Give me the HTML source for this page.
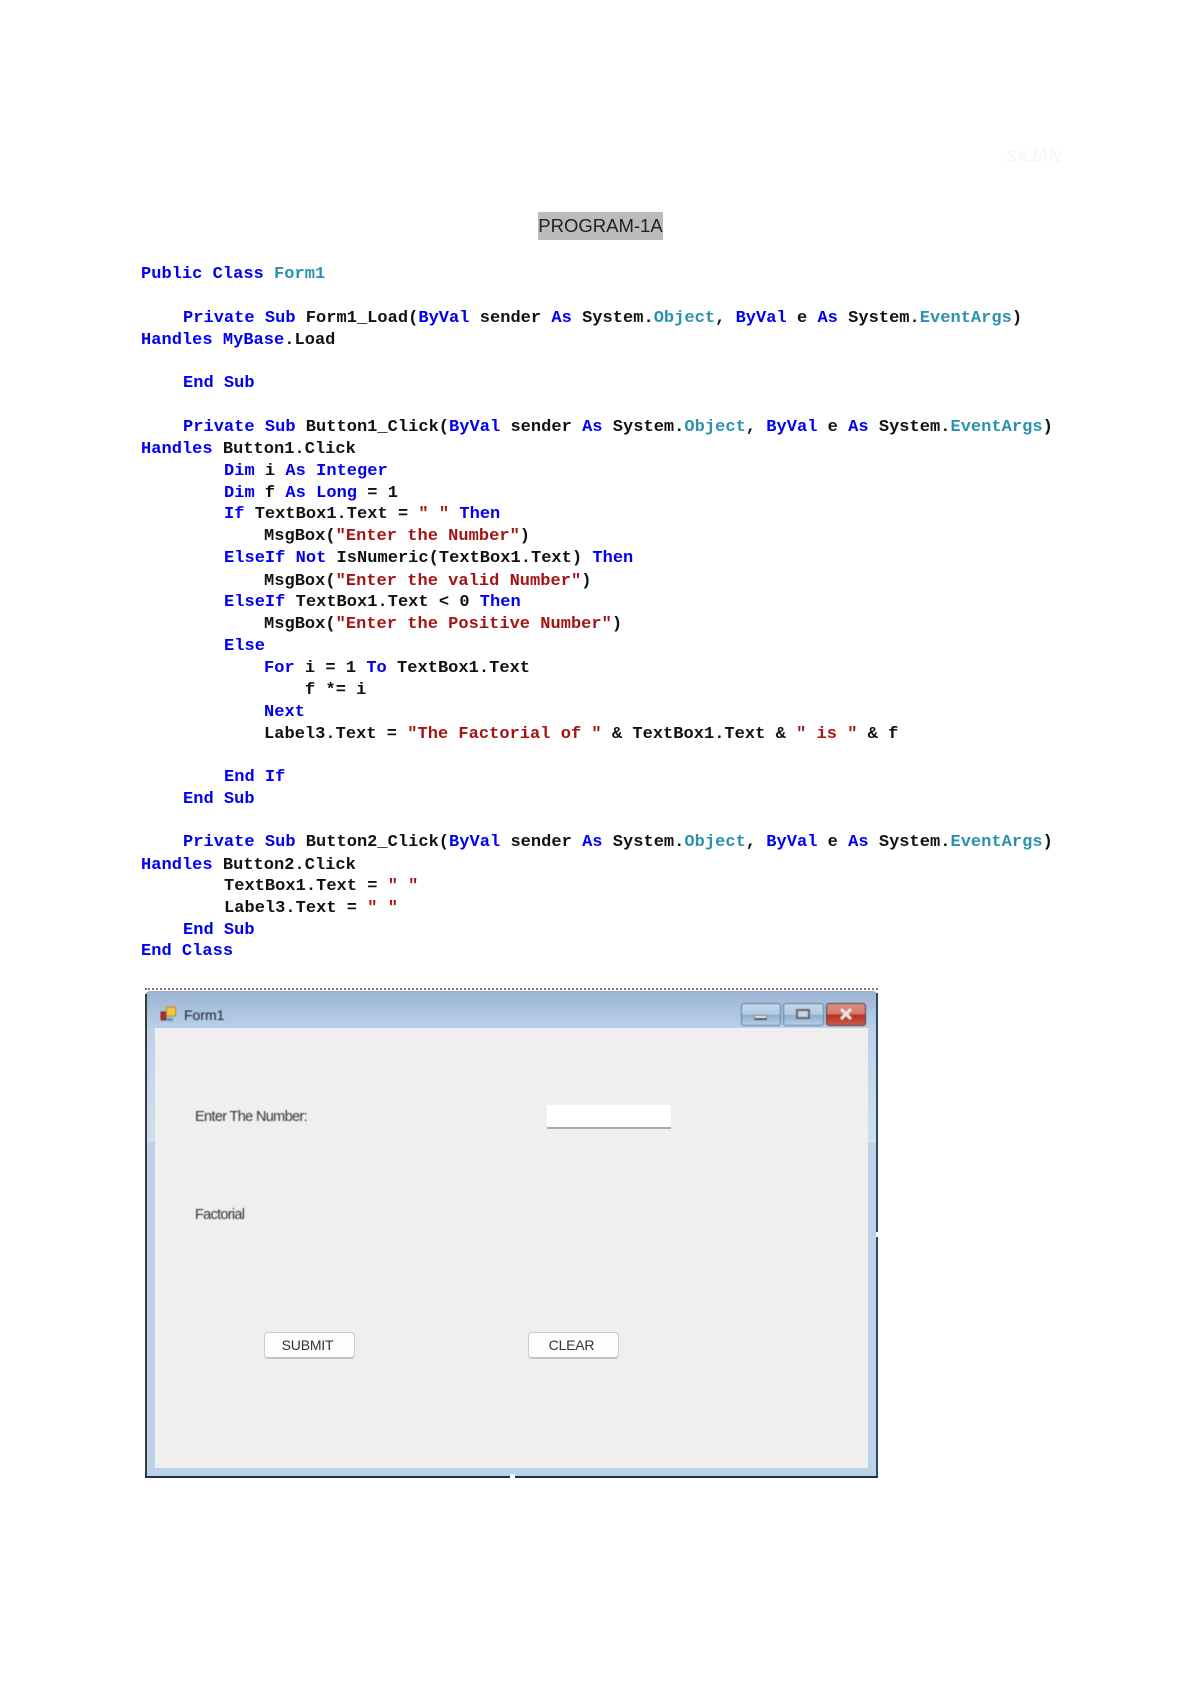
<!DOCTYPE html>
<html>
<head>
<meta charset="utf-8">
<style>
html,body{margin:0;padding:0;background:#fff;width:1200px;height:1696px;overflow:hidden}
#p{position:relative;width:1200px;height:1696px}
.l{position:absolute;white-space:pre;font:bold 17px/22px "Liberation Mono",monospace;letter-spacing:.03px;color:#111;filter:blur(.35px)}
.k{color:#0000f0}.t{color:#2b91af}.s{color:#a31515}
.a{position:absolute}
.u{position:absolute;white-space:pre;font-family:"Liberation Sans",sans-serif;color:#333;filter:blur(.4px)}
</style>
</head>
<body>
<div id="p">
<div class="a" style="left:1005px;top:145px;font:italic 17.5px/22px 'Liberation Sans',sans-serif;color:#f5f5f5">SAJAN</div>
<div class="a" style="left:538px;top:212px;width:125px;height:28px;background:#bbb;text-align:center;font:18.5px/28px 'Liberation Sans',sans-serif;color:#222;filter:blur(.3px)">PROGRAM-1A</div>

<div class="l" style="left:141px;top:264px"><span class="k">Public Class</span> <span class="t">Form1</span></div>
<div class="l" style="left:183px;top:308px"><span class="k">Private Sub</span> Form1_Load(<span class="k">ByVal</span> sender <span class="k">As</span> System.<span class="t">Object</span>, <span class="k">ByVal</span> e <span class="k">As</span> System.<span class="t">EventArgs</span>)</div>
<div class="l" style="left:141px;top:330px"><span class="k">Handles MyBase</span>.Load</div>
<div class="l" style="left:183px;top:373px"><span class="k">End Sub</span></div>
<div class="l" style="left:183px;top:417px"><span class="k">Private Sub</span> Button1_Click(<span class="k">ByVal</span> sender <span class="k">As</span> System.<span class="t">Object</span>, <span class="k">ByVal</span> e <span class="k">As</span> System.<span class="t">EventArgs</span>)</div>
<div class="l" style="left:141px;top:439px"><span class="k">Handles</span> Button1.Click</div>
<div class="l" style="left:224px;top:461px"><span class="k">Dim</span> i <span class="k">As Integer</span></div>
<div class="l" style="left:224px;top:483px"><span class="k">Dim</span> f <span class="k">As Long</span> = 1</div>
<div class="l" style="left:224px;top:504px"><span class="k">If</span> TextBox1.Text = <span class="s">" "</span> <span class="k">Then</span></div>
<div class="l" style="left:264px;top:526px">MsgBox(<span class="s">"Enter the Number"</span>)</div>
<div class="l" style="left:224px;top:548px"><span class="k">ElseIf Not</span> IsNumeric(TextBox1.Text) <span class="k">Then</span></div>
<div class="l" style="left:264px;top:571px">MsgBox(<span class="s">"Enter the valid Number"</span>)</div>
<div class="l" style="left:224px;top:592px"><span class="k">ElseIf</span> TextBox1.Text &lt; 0 <span class="k">Then</span></div>
<div class="l" style="left:264px;top:614px">MsgBox(<span class="s">"Enter the Positive Number"</span>)</div>
<div class="l" style="left:224px;top:636px"><span class="k">Else</span></div>
<div class="l" style="left:264px;top:658px"><span class="k">For</span> i = 1 <span class="k">To</span> TextBox1.Text</div>
<div class="l" style="left:305px;top:680px">f *= i</div>
<div class="l" style="left:264px;top:702px"><span class="k">Next</span></div>
<div class="l" style="left:264px;top:724px">Label3.Text = <span class="s">"The Factorial of "</span> &amp; TextBox1.Text &amp; <span class="s">" is "</span> &amp; f</div>
<div class="l" style="left:224px;top:767px"><span class="k">End If</span></div>
<div class="l" style="left:183px;top:789px"><span class="k">End Sub</span></div>
<div class="l" style="left:183px;top:832px"><span class="k">Private Sub</span> Button2_Click(<span class="k">ByVal</span> sender <span class="k">As</span> System.<span class="t">Object</span>, <span class="k">ByVal</span> e <span class="k">As</span> System.<span class="t">EventArgs</span>)</div>
<div class="l" style="left:141px;top:855px"><span class="k">Handles</span> Button2.Click</div>
<div class="l" style="left:224px;top:876px">TextBox1.Text = <span class="s">" "</span></div>
<div class="l" style="left:224px;top:898px">Label3.Text = <span class="s">" "</span></div>
<div class="l" style="left:183px;top:920px"><span class="k">End Sub</span></div>
<div class="l" style="left:141px;top:941px"><span class="k">End Class</span></div>

<!-- dotted top -->
<div class="a" style="left:145px;top:988px;width:733px;height:0;border-top:2px dotted #777"></div>
<!-- window -->
<div class="a" style="left:145px;top:991px;width:732px;height:487px;background:#bcd2e9;border-radius:5px 4px 0 0"></div>
<div class="a" style="left:145px;top:991px;width:732px;height:37px;background:linear-gradient(#9ab3d2,#b9d0e8);border-radius:5px 4px 0 0"></div>
<div class="a" style="left:145px;top:994px;width:2px;height:484px;background:#3a3a3a"></div>
<div class="a" style="left:876px;top:993px;width:2px;height:485px;background:#2e4a66"></div>
<div class="a" style="left:876px;top:1232px;width:2px;height:5px;background:#fff"></div>
<div class="a" style="left:145px;top:1476px;width:733px;height:2px;background:#2a2f38"></div>
<div class="a" style="left:147px;top:1475px;width:729px;height:1px;background:#9fd6f2"></div>
<div class="a" style="left:510px;top:1474px;width:5px;height:5px;background:#fff"></div>
<!-- client -->
<div class="a" style="left:155px;top:1028px;width:713px;height:440px;background:#efefef"></div>
<!-- strip highlights -->
<div class="a" style="left:147px;top:1028px;width:8px;height:114px;background:linear-gradient(#bcd2e9,#cfdff0)"></div>
<div class="a" style="left:868px;top:1028px;width:8px;height:115px;background:linear-gradient(#bcd2e9,#cfdff0)"></div>

<!-- icon -->
<svg class="a" style="left:160px;top:1005px;filter:blur(.4px)" width="17" height="18" viewBox="0 0 17 18">
<rect x="1" y="7" width="5" height="8" fill="#a8322c" stroke="#7a2a28"/>
<rect x="6.5" y="2" width="9" height="9" fill="#f4c83e" stroke="#c08a20"/>
<rect x="7" y="13" width="6" height="3" fill="#5b8fd0"/>
</svg>
<div class="u" style="left:184px;top:1006px;font-size:14px;line-height:18px;color:#223">Form1</div>

<!-- window buttons -->
<div class="a" style="left:741px;top:1003px;width:38px;height:21px;border:1px solid #5f7c9f;border-radius:3px;background:linear-gradient(#c2d5ea 0,#b5cbe3 50%,#8cadcc 52%,#b9cfe6 100%);filter:blur(.4px)">
<div class="a" style="left:12px;top:11px;width:13px;height:5px;background:#eef2f6;border:1px solid #888;border-bottom:2px solid #555;box-sizing:border-box"></div>
</div>
<div class="a" style="left:783px;top:1003px;width:39px;height:21px;border:1px solid #5f7c9f;border-radius:3px;background:linear-gradient(#c2d5ea 0,#b5cbe3 50%,#8cadcc 52%,#b9cfe6 100%);filter:blur(.4px)">
<div class="a" style="left:12px;top:5px;width:14px;height:10px;background:#c8d4e0;border:2px solid #666;box-sizing:border-box"></div>
</div>
<div class="a" style="left:826px;top:1003px;width:38px;height:21px;border:1px solid #50405a;border-radius:3px;background:linear-gradient(#dc8f83 0,#d5766a 48%,#b5301f 52%,#cb5a4a 100%);filter:blur(.4px)">
<svg class="a" style="left:11px;top:3px" width="16" height="14" viewBox="0 0 16 14"><path d="M3 2L13 12M13 2L3 12" stroke="#e9e4e2" stroke-width="3.2"/></svg>
</div>

<div class="u" style="left:195px;top:1108px;font-size:14.5px;line-height:18px;letter-spacing:-.65px">Enter The Number:</div>
<div class="a" style="left:547px;top:1105px;width:124px;height:22px;background:#fff;border-bottom:2px solid #aaa"></div>
<div class="u" style="left:195px;top:1206px;font-size:14.5px;line-height:18px;letter-spacing:-.7px">Factorial</div>

<div class="a" style="left:264px;top:1332px;width:89px;height:24px;background:#fdfdfd;border:1px solid #ccc;border-bottom:2px solid #c4c4c4;border-radius:4px;text-align:center;font:14px/24px 'Liberation Sans',sans-serif;letter-spacing:-.2px;color:#333;filter:blur(.35px)"><span style="position:relative;left:-2px">SUBMIT</span></div>
<div class="a" style="left:528px;top:1332px;width:89px;height:24px;background:#fdfdfd;border:1px solid #ccc;border-bottom:2px solid #c4c4c4;border-radius:4px;text-align:center;font:14px/24px 'Liberation Sans',sans-serif;letter-spacing:-.2px;color:#333;filter:blur(.35px)"><span style="position:relative;left:-2px">CLEAR</span></div>
</div>
</body>
</html>
